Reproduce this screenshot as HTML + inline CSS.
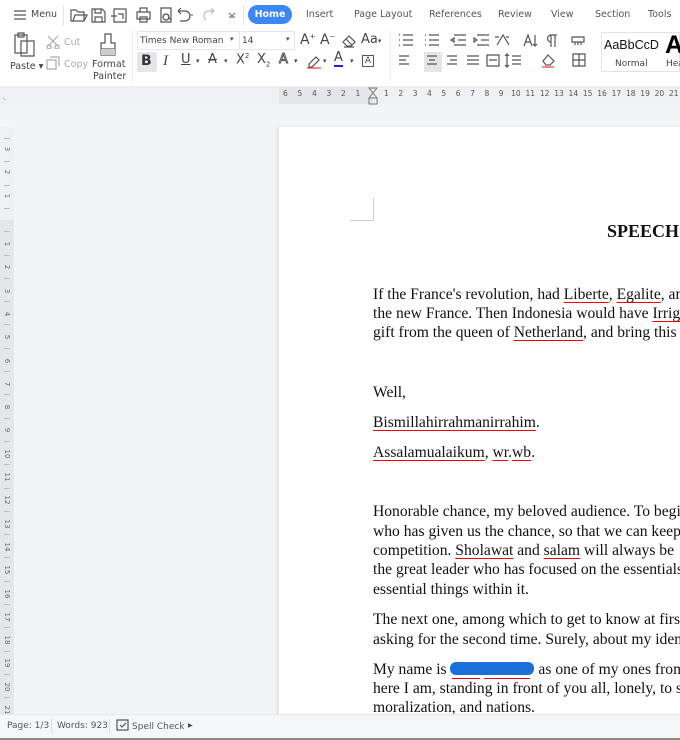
<!DOCTYPE html>
<html><head><meta charset="utf-8"><style>
*{margin:0;padding:0;box-sizing:border-box}
body{width:680px;height:740px;overflow:hidden;background:#f3f4f6;font-family:"DejaVu Sans","Liberation Sans",sans-serif;position:relative;color:#333}
.a{position:absolute;white-space:nowrap}
.ui{font-size:9.5px;color:#444}
.tab{font-size:9.5px;color:#555;top:9px}
svg.i{position:absolute;fill:none;stroke:#555;stroke-width:1.2}
.doc{font-family:"Liberation Serif",serif;font-size:15.6px;color:#111;left:373px}
.u{text-decoration:underline;text-decoration-color:#e00;text-underline-offset:3px}
.vr{position:absolute;left:0;width:14px;font-size:7px;color:#666;text-align:center;transform:rotate(90deg)}
.hr{position:absolute;top:89px;font-size:7.5px;color:#555}
</style></head><body>
<div class="a" style="left:0;top:0;width:680px;height:86px;background:#fff"></div>
<svg class="i" style="left:13px;top:9px" width="14" height="12"><path d="M1 2h12M1 6h12M1 10h12"/></svg>
<div class="a ui" style="left:31px;top:9px">Menu</div>
<div class="a" style="left:63px;top:5px;width:1px;height:20px;background:#e3e3e3"></div>
<svg class="i" style="left:70px;top:6px" width="110" height="18">
<path d="M1 4h5l2 2h6v9H1z M3 15l2-6h12l-3 6"/>
<path d="M22 3h10l3 3v10H22z M25 3v4h6V3 M25 16v-5h7v5"/>
<path d="M44 3h12v13H44z M48 8h5v5 M41 10h6"/>
<path d="M67 6h13v7H67z M70 6V2h7v4 M70 11h7v5h-7z"/>
<path d="M91 2h10v14H91z M96 8a3 3 0 1 0 .1 0 M98 11l3 3"/>
</svg>
<svg class="i" style="left:174px;top:6px" width="70" height="18"><path d="M4 5h7a5 5 0 0 1 0 10H6 M4 5l3-3 M4 5l3 3"/><path d="M16 9h3" stroke="#777"/><path d="M40 5h-6a5 5 0 0 0-2 9 M40 5l-3-3 M40 5l-3 3" stroke="#bbb"/><path d="M55 7l3 3 3-3 M55 11h6" stroke="#777"/></svg>
<div class="a" style="left:243px;top:5px;width:1px;height:20px;background:#e3e3e3"></div>
<div class="a" style="left:248px;top:5px;width:44px;height:19px;border-radius:10px;background:#3d86f5;color:#fff;font-size:9.5px;font-weight:bold;text-align:center;line-height:19px">Home</div>
<div class="a tab" style="left:306px">Insert</div>
<div class="a tab" style="left:354px">Page Layout</div>
<div class="a tab" style="left:429px">References</div>
<div class="a tab" style="left:498px">Review</div>
<div class="a tab" style="left:551px">View</div>
<div class="a tab" style="left:595px">Section</div>
<div class="a tab" style="left:648px">Tools</div>
<svg class="i" style="left:12px;top:32px" width="26" height="26"><path d="M3 3h12v18H3z M6 1h6v4H6z M9 9h13v15H9z" /></svg>
<div class="a ui" style="left:10px;top:61px">Paste ▾</div>
<svg class="i" style="left:46px;top:35px;stroke:#aaa" width="16" height="14"><path d="M2 1l10 10 M12 1L2 11"/><circle cx="3" cy="12" r="2"/><circle cx="11" cy="12" r="2"/></svg>
<div class="a ui" style="left:64px;top:37px;color:#aaa">Cut</div>
<svg class="i" style="left:46px;top:56px;stroke:#aaa" width="14" height="14"><path d="M1 4h9v9H1z M4 1h9v9"/></svg>
<div class="a ui" style="left:64px;top:59px;color:#aaa">Copy</div>
<svg class="i" style="left:98px;top:33px" width="20" height="24"><path d="M7 1h6v9h4v12H3V10h4z M3 16h14"/><rect x="3" y="16" width="14" height="6" fill="#ccc" stroke="none"/></svg>
<div class="a ui" style="left:92px;top:59px">Format</div>
<div class="a ui" style="left:93px;top:71px">Painter</div>
<div class="a" style="left:132px;top:30px;width:1px;height:52px;background:#eee"></div>
<div class="a" style="left:137px;top:31px;width:103px;height:19px;border:1px solid #e6e6e6"></div>
<div class="a ui" style="left:140px;top:36px;font-size:9px">Times New Roman</div>
<div class="a ui" style="left:230px;top:35px;font-size:7px">▾</div>
<div class="a" style="left:239px;top:31px;width:56px;height:19px;border:1px solid #e6e6e6"></div>
<div class="a ui" style="left:242px;top:36px;font-size:9px">14</div>
<div class="a ui" style="left:286px;top:35px;font-size:7px">▾</div>
<div class="a" style="left:300px;top:32px;font-size:14px;color:#444">A<sup style="font-size:7px">+</sup></div>
<div class="a" style="left:320px;top:32px;font-size:14px;color:#444">A<sup style="font-size:7px">−</sup></div>
<svg class="i" style="left:341px;top:34px" width="16" height="14"><path d="M2 8l6-6 6 6-4 4H6z M5 5l6 6 M3 13h10"/></svg>
<div class="a" style="left:361px;top:32px;font-size:13px;color:#444">Aa<span style="font-size:7px">▾</span></div>
<div class="a" style="left:137px;top:52px;width:20px;height:20px;background:#e4e6ea;border-radius:2px"></div>
<div class="a" style="left:141px;top:53px;font-size:14px;font-weight:bold;color:#333">B</div>
<div class="a" style="left:163px;top:53px;font-family:'Liberation Serif';font-style:italic;font-size:15px;color:#444">I</div>
<div class="a" style="left:181px;top:52px;font-size:13px;color:#444;text-decoration:underline">U</div><div class="a ui" style="left:196px;top:57px;font-size:7px">▾</div>
<div class="a" style="left:208px;top:52px;font-size:13px;color:#444;text-decoration:line-through">A</div><div class="a ui" style="left:224px;top:57px;font-size:7px">▾</div>
<div class="a" style="left:236px;top:52px;font-size:13px;color:#444">X<sup style="font-size:7px">2</sup></div>
<div class="a" style="left:257px;top:52px;font-size:13px;color:#444">X<sub style="font-size:7px">2</sub></div>
<div class="a" style="left:279px;top:52px;font-size:13px;color:#fff;-webkit-text-stroke:1px #555">A</div><div class="a ui" style="left:294px;top:57px;font-size:7px">▾</div>
<svg class="i" style="left:306px;top:54px" width="16" height="16"><path d="M3 10l7-7 3 3-7 7H3z"/><path d="M1 14h14" stroke="#e33"/></svg><div class="a ui" style="left:323px;top:57px;font-size:7px">▾</div>
<div class="a" style="left:334px;top:51px;font-size:13px;color:#444;border-bottom:2px solid #22c;line-height:14px">A</div><div class="a ui" style="left:350px;top:57px;font-size:7px">▾</div>
<div class="a" style="left:362px;top:55px;width:12px;height:12px;border:1px solid #555;font-size:9px;text-align:center;line-height:10px;color:#444">A</div>
<div class="a" style="left:390px;top:30px;width:1px;height:52px;background:#eee"></div>
<div class="a" style="left:424px;top:52px;width:18px;height:20px;background:#e4e6ea"></div>
<svg class="i" style="left:397px;top:33px" width="205" height="38">
<path d="M2 2h1M2 7h1M2 12h1M6 2h10M6 7h10M6 12h10"/>
<path d="M28 2h1M28 7h1M28 12h1M32 2h10M32 7h10M32 12h10"/>
<path d="M57 2h12M61 7h8M57 12h12M54 7l3-2v4z"/>
<path d="M80 2h12M84 7h8M80 12h12M77 5l3 2-3 2z"/>
<path d="M100 12l6-10 6 10M98 4h4M112 4h-3"/>
<path d="M127 13l4-11 4 11M128 9h6M138 2v11M136 11l2 2 2-2"/>
<path d="M154 2v12M158 2v12M154 2h6M154 2a3 3 0 0 0 0 7"/>
<path d="M175 4h12v5h-12zM178 9v3M181 9v3M184 9v3"/>
<path d="M2 23h10M2 27h7M2 31h10"/>
<path d="M30 23h10M32 27h6M30 31h10"/>
<path d="M50 23h10M53 27h7M50 31h10"/>
<path d="M70 23h12M70 27h12M70 31h12"/>
<path d="M90 22h12v11H90zM92 27h8"/>
<path d="M110 21v13M108 23l2-2 2 2M108 32l2 2 2-2M115 23h9M115 27h9M115 31h9"/>
<path d="M146 28l5-6 6 6-4 4h-4z"/><path d="M145 34h12" stroke="#e33"/>
<path d="M176 21h12v12h-12zM182 21v12M176 27h12"/>
</svg>
<div class="a" style="left:601px;top:32px;width:79px;height:40px;border:1px solid #e3e3e3;background:#fff"></div>
<div class="a" style="left:604px;top:38px;font-size:12.5px;font-family:'Liberation Sans';color:#111">AaBbCcD</div>
<div class="a" style="left:665px;top:31px;font-size:25px;font-weight:bold;font-family:'Liberation Sans';color:#000">A</div>
<div class="a ui" style="left:615px;top:59px;font-size:9px">Normal</div>
<div class="a ui" style="left:666px;top:59px;font-size:9px">Hea</div>
<div class="a" style="left:0;top:86px;width:680px;height:1px;background:#ececec"></div>
<div class="a" style="left:0;top:87px;width:680px;height:17px;background:#eef0f3"></div>
<div class="a" style="left:279px;top:87px;width:94px;height:17px;background:#e4e6ea"></div>
<div class="a" style="left:3px;top:93px;font-size:7px;color:#888">⌞</div>
<div id="hr"></div>
<svg class="i" style="left:368px;top:87px;stroke:#777;stroke-width:1" width="10" height="18"><path d="M1 1h8L5 6zM5 6L1 11h8zM1 11h8v6H1z"/></svg>
<div class="a" style="left:0;top:127px;width:14px;height:587px;background:#eef0f3"></div>
<div class="a" style="left:0;top:220px;width:14px;height:494px;background:#e4e6ea"></div>
<div id="vr"></div>
<div class="a" style="left:279px;top:127px;width:410px;height:600px;background:#fff;box-shadow:-2px 0 4px rgba(0,0,0,.08)"></div>
<div class="a" style="left:350px;top:198px;width:24px;height:23px;border-right:1px solid #ccc;border-bottom:1px solid #ccc"></div>
<div class="a" style="left:607px;top:221px;font-family:'Liberation Serif';font-weight:bold;font-size:18px;color:#111">SPEECH</div>
<div class="a doc" style="top:286px">If the France's revolution, had <span class="u">Liberte</span>, <span class="u">Egalite</span>, and</div>
<div class="a doc" style="top:305px">the new France. Then Indonesia would have <span class="u">Irrigation</span></div>
<div class="a doc" style="top:324px">gift from the queen of <span class="u">Netherland</span>, and bring this</div>
<div class="a doc" style="top:384px">Well,</div>
<div class="a doc" style="top:414px"><span class="u">Bismillahirrahmanirrahim</span>.</div>
<div class="a doc" style="top:444px"><span class="u">Assalamualaikum</span>, <span class="u">wr</span>.<span class="u">wb</span>.</div>
<div class="a doc" style="top:503px">Honorable chance, my beloved audience. To begin</div>
<div class="a doc" style="top:523px">who has given us the chance, so that we can keep</div>
<div class="a doc" style="top:542px">competition. <span class="u">Sholawat</span> and <span class="u">salam</span> will always be</div>
<div class="a doc" style="top:561px">the great leader who has focused on the essentials</div>
<div class="a doc" style="top:581px">essential things within it.</div>
<div class="a doc" style="top:611px">The next one, among which to get to know at first</div>
<div class="a doc" style="top:631px">asking for the second time. Surely, about my identity</div>
<div class="a doc" style="top:661px">My name is <span style="display:inline-block;width:84px"></span> as one of my ones from</div>
<div class="a" style="left:450px;top:662px;width:84px;height:13px;background:#1a6fd8;border-radius:6px"></div>
<div class="a" style="left:452px;top:678px;width:28px;height:1px;background:#e00"></div>
<div class="a" style="left:484px;top:678px;width:46px;height:1px;background:#e00"></div>
<div class="a doc" style="top:680px">here I am, standing in front of you all, lonely, to say</div>
<div class="a doc" style="top:699px">moralization, and nations.</div>
<div class="a" style="left:0;top:714px;width:680px;height:26px;background:#f5f6f8;border-top:1px solid #e6e6e6"></div>
<div class="a ui" style="left:7px;top:721px;font-size:9px;color:#555">Page: 1/3</div>
<div class="a" style="left:51px;top:719px;width:1px;height:14px;background:#ddd"></div>
<div class="a ui" style="left:57px;top:721px;font-size:9px;color:#555">Words: 923</div>
<div class="a" style="left:109px;top:719px;width:1px;height:14px;background:#ddd"></div>
<svg class="i" style="left:116px;top:719px" width="13" height="13"><path d="M1 1h11v10H1zM4 6l2 2 4-4"/></svg>
<div class="a ui" style="left:132px;top:722px;font-size:9px;color:#555">Spell Check</div>
<div class="a ui" style="left:188px;top:722px;font-size:6px">▶</div>
<div class="a" style="left:0;top:738px;width:680px;height:2px;background:#888"></div>
<script>
var h='',n=[6,5,4,3,2,1];for(var i=0;i<6;i++)h+='<div class="hr" style="left:'+(283+i*14.5)+'px">'+n[i]+'</div>';
for(var k=1;k<=21;k++)h+='<div class="hr" style="left:'+(384+(k-1)*14.35-(k>9?2:0))+'px">'+k+'</div>';
document.getElementById('hr').innerHTML=h;
var v='';[[3,150],[2,173],[1,197]].forEach(function(p){v+='<div class="vr" style="top:'+(p[1]-5)+'px">'+p[0]+'</div>'});
for(var j=1;j<=21;j++){var y=245+(j-1)*23.3;v+='<div class="vr" style="top:'+(y-5)+'px">'+j+'</div>';}
for(var t=0;t<26;t++){v+='<div class="a" style="left:4px;top:'+(138+t*23.3)+'px;width:6px;height:1px;background:#bbb"></div>';}
document.getElementById('vr').innerHTML=v;
</script>
</body></html>
